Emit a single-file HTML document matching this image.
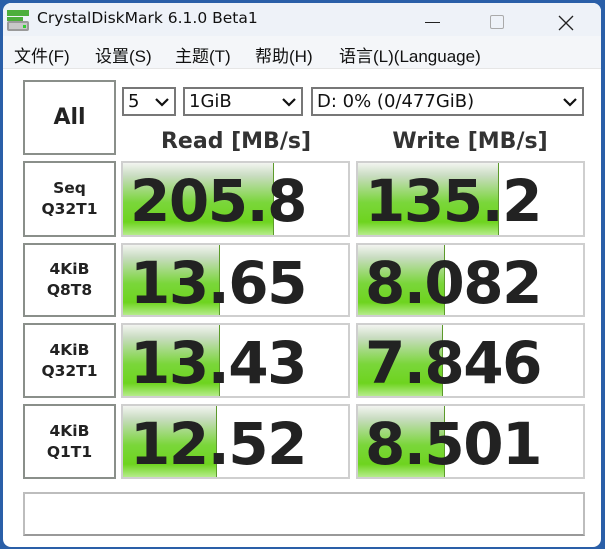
<!DOCTYPE html>
<html><head><meta charset="utf-8"><style>
*{margin:0;padding:0;box-sizing:border-box}
body{width:605px;height:549px;background:#2a5fa8;overflow:hidden;font-family:"Liberation Sans","Noto Sans CJK SC",sans-serif;position:relative}
.win{position:absolute;left:3px;top:3px;width:598px;height:544px;background:#fff;border-radius:8px;overflow:hidden}
.title{position:absolute;left:0;top:0;width:598px;height:33px;background:#eef2f8}
.title .t{position:absolute;left:34px;top:6px;color:#111;font-family:"DejaVu Sans",sans-serif;font-size:15.5px}
.menu{position:absolute;left:0;top:33px;width:598px;height:33px;background:#f4f6f9;border-bottom:1px solid #e6e6e6}
.menu span{position:absolute;top:6px;font-size:17px;color:#111}
.abs{position:absolute}
.lbl{position:absolute;border:2px solid #8a8f8a;background:#fff;display:flex;align-items:center;justify-content:center;text-align:center;font-family:"DejaVu Sans",sans-serif;font-weight:bold;color:#222;font-size:15.5px;line-height:21px}
.cb{position:absolute;top:84px;height:29px;border:2px solid #777;background:#fff;font-family:"DejaVu Sans",sans-serif;font-size:18px;color:#111;padding-left:4px;line-height:25px}
.cb svg{position:absolute;right:5px;top:8px}
.hd{position:absolute;top:126px;font-family:"DejaVu Sans",sans-serif;font-weight:bold;font-size:22px;color:#333;text-align:center}
.val{position:absolute;border:2px solid #cfcfcf;background:#fff;overflow:hidden}
.bar{position:absolute;left:0;top:0;bottom:0;background:linear-gradient(#f2f4f0 0%,#c8dcc0 18%,#7ad63a 55%,#6ed41f 82%,#b5ec8a 100%);border-right:1px solid #5c9a2a}
.num{position:absolute;left:7px;top:2px;font-family:"DejaVu Sans",sans-serif;font-weight:bold;font-size:58px;letter-spacing:-1.5px;color:#222;line-height:72px}
</style></head><body>
<div class="win">
 <div class="title">
  <svg class="abs" style="left:3px;top:6px" width="26" height="24"><rect x="1" y="1" width="22" height="6" fill="#4cae3c"/><rect x="1" y="8" width="16" height="4" fill="#4cae3c"/><rect x="1" y="12" width="22" height="10" rx="2" fill="#9a9a9a"/><rect x="3" y="14" width="18" height="6" fill="#c8c8c8"/><rect x="17" y="16" width="3" height="3" fill="#3c3"/></svg>
  <div class="t">CrystalDiskMark 6.1.0 Beta1</div>
  <div class="abs" style="left:422px;top:19px;width:15px;height:1px;background:#222"></div>
  <div class="abs" style="left:487px;top:12px;width:14px;height:14px;border:1px solid #aaa;border-radius:2px"></div>
  <svg class="abs" style="left:555px;top:12px" width="16" height="16"><path d="M1 1L15 15M15 1L1 15" stroke="#222" stroke-width="1.3"/></svg>
 </div>
 <div class="menu">
  <span style="left:11px">文件(F)</span><span style="left:92px">设置(S)</span><span style="left:172px">主题(T)</span><span style="left:252px">帮助(H)</span><span style="left:336px">语言(L)(Language)</span>
 </div>
 <div class="lbl" style="left:20px;top:77px;width:93px;height:75px;font-size:22px">All</div>
 <div class="cb" style="left:119px;width:54px">5<svg width="14" height="10"><path d="M1 2L7 8L13 2" stroke="#111" stroke-width="2.2" fill="none"/></svg></div>
 <div class="cb" style="left:180px;width:120px">1GiB<svg width="14" height="10"><path d="M1 2L7 8L13 2" stroke="#111" stroke-width="2.2" fill="none"/></svg></div>
 <div class="cb" style="left:308px;width:273px">D: 0% (0/477GiB)<svg width="14" height="10"><path d="M1 2L7 8L13 2" stroke="#111" stroke-width="2.2" fill="none"/></svg></div>
 <div class="hd" style="left:119px;width:228px">Read [MB/s]</div>
 <div class="hd" style="left:353px;width:228px">Write [MB/s]</div>

 <div class="lbl" style="left:20px;top:158px;width:93px;height:76px">Seq<br>Q32T1</div>
 <div class="val" style="left:118px;top:158px;width:229px;height:76px"><div class="bar" style="width:151px"></div><div class="num">205.8</div></div>
 <div class="val" style="left:353px;top:158px;width:229px;height:76px"><div class="bar" style="width:141px"></div><div class="num">135.2</div></div>

 <div class="lbl" style="left:20px;top:240px;width:93px;height:74px">4KiB<br>Q8T8</div>
 <div class="val" style="left:118px;top:240px;width:229px;height:74px"><div class="bar" style="width:97px"></div><div class="num">13.65</div></div>
 <div class="val" style="left:353px;top:240px;width:229px;height:74px"><div class="bar" style="width:87px"></div><div class="num">8.082</div></div>

 <div class="lbl" style="left:20px;top:320px;width:93px;height:75px">4KiB<br>Q32T1</div>
 <div class="val" style="left:118px;top:320px;width:229px;height:75px"><div class="bar" style="width:97px"></div><div class="num">13.43</div></div>
 <div class="val" style="left:353px;top:320px;width:229px;height:75px"><div class="bar" style="width:85px"></div><div class="num">7.846</div></div>

 <div class="lbl" style="left:20px;top:401px;width:93px;height:75px">4KiB<br>Q1T1</div>
 <div class="val" style="left:118px;top:401px;width:229px;height:75px"><div class="bar" style="width:94px"></div><div class="num">12.52</div></div>
 <div class="val" style="left:353px;top:401px;width:229px;height:75px"><div class="bar" style="width:87px"></div><div class="num">8.501</div></div>

 <div class="abs" style="left:20px;top:489px;width:562px;height:44px;border:2px solid #bdbdbd;border-bottom-color:#999;background:#fff"></div>
</div>
</body></html>
